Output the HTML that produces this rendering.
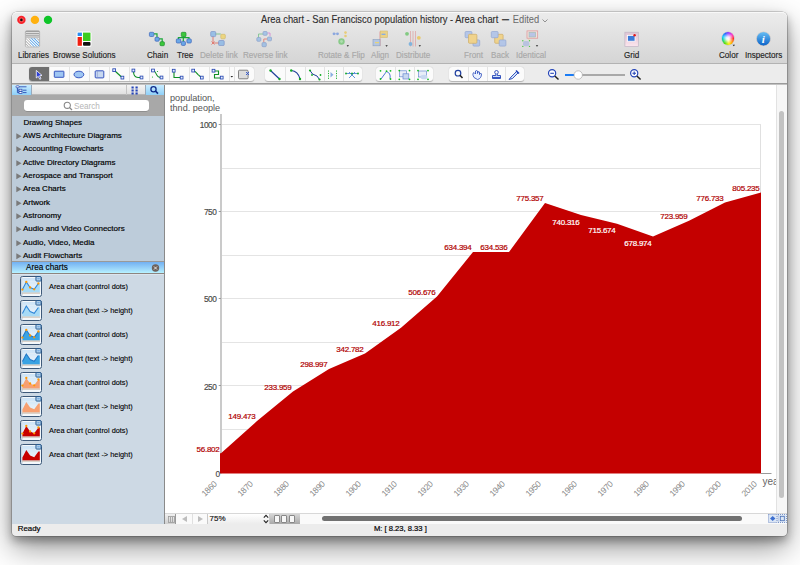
<!DOCTYPE html>
<html><head><meta charset="utf-8">
<style>
*{box-sizing:border-box;margin:0;padding:0}
html,body{width:800px;height:565px;overflow:hidden;background:#fff;font-family:"Liberation Sans",sans-serif}
div,span,svg{position:absolute}
.t{white-space:nowrap;line-height:1}
.tl{top:50.8px;font-size:9px;color:#1e1e1e;white-space:nowrap;line-height:1;transform:scaleX(0.9);transform-origin:0 0;-webkit-text-stroke:0.15px #1e1e1e}
.tl.dis{-webkit-text-stroke:0.15px #a8a8a8}
.dis{color:#a8a8a8}
.grp{top:67px;height:14px;background:#fbfbfb;border-radius:3px;box-shadow:0 0.5px 1px rgba(0,0,0,0.25)}
.sep{top:0;width:1px;height:14px;background:#e6e6e6}
.yl{font-size:8.3px;letter-spacing:-0.5px;fill:#484848;stroke:#484848;stroke-width:0.15px}
.dl{font-size:8px;letter-spacing:-0.25px}
.xl{font-size:8.5px;letter-spacing:-0.3px;fill:#888}
.li{left:12px;width:152px;height:13px;font-size:8px;color:#111;white-space:nowrap;line-height:1}
.arr{left:5px;top:3px;width:0;height:0;border-left:5px solid #7a7a7a;border-top:3.5px solid transparent;border-bottom:3.5px solid transparent}
.li span{left:11px;top:2px}
.ic{left:20px;width:21px;height:20px;border:1px solid #5e7590;border-radius:2px;background:linear-gradient(#fdfdfd,#dde6ee);box-shadow:0 1px 1px rgba(0,0,0,0.35);overflow:hidden}
.itx{left:48px;font-size:7.3px;color:#111;white-space:nowrap;line-height:1}
</style></head><body>

<div style="left:12px;top:12px;width:775px;height:524px;border-radius:5px 5px 4px 4px;background:#ececec;box-shadow:0 5px 10px rgba(0,0,0,0.32),0 12px 30px rgba(0,0,0,0.42),0 0 0 0.6px rgba(0,0,0,0.3)"></div>
<div style="left:12px;top:12px;width:775px;height:52px;border-radius:5px 5px 0 0;background:linear-gradient(#ececec,#d5d5d5);border-bottom:1px solid #b3b3b3;box-shadow:inset 0 1px 0 #f8f8f8"></div>
<svg style="left:0;top:0" width="60" height="30"><circle cx="21.4" cy="19.9" r="4.2" fill="#f8222a"/><circle cx="21.4" cy="19.9" r="2.4" fill="#ff5a5a"/><circle cx="21.4" cy="19.9" r="1.3" fill="#111"/><circle cx="34.9" cy="19.9" r="4.2" fill="#ffb10f"/><circle cx="48" cy="19.9" r="4.2" fill="#0ec528"/></svg>
<div class="t" style="left:261px;top:14.6px;font-size:10.2px;color:#2c2c2c;transform:scaleX(0.915);transform-origin:0 0;-webkit-text-stroke:0.12px #2c2c2c">Area chart - San Francisco population history - Area chart <span style="position:static;color:#444;font-weight:bold;display:inline-block;transform:scaleX(0.75)">—</span> <span style="position:static;color:#6a6a6a;-webkit-text-stroke:0">Edited</span></div>
<svg style="left:541.5px;top:18.5px" width="6" height="4"><path d="M0.5 0.5 L3 3 L5.5 0.5" fill="none" stroke="#888" stroke-width="0.9"/></svg>
<div class="tl" style="left:17.5px">Libraries</div>
<div class="tl" style="left:53.2px">Browse Solutions</div>
<div class="tl" style="left:147px">Chain</div>
<div class="tl" style="left:176.6px">Tree</div>
<div class="tl dis" style="left:200px">Delete link</div>
<div class="tl dis" style="left:243px">Reverse link</div>
<div class="tl dis" style="left:318px">Rotate &amp; Flip</div>
<div class="tl dis" style="left:370.7px">Align</div>
<div class="tl dis" style="left:396px">Distribute</div>
<div class="tl dis" style="left:463.7px">Front</div>
<div class="tl dis" style="left:490.5px">Back</div>
<div class="tl dis" style="left:515.5px">Identical</div>
<div class="tl" style="left:624.2px">Grid</div>
<div class="tl" style="left:718.7px">Color</div>
<div class="tl" style="left:744.5px">Inspectors</div>
<div style="left:12px;top:63px;width:775px;height:21px;background:#ececec;border-top:1px solid #b3b3b3;border-bottom:1px solid #9a9a9a"></div>
<div class="grp" style="left:29px;width:225px"></div>
<div class="grp" style="left:265.2px;width:97.0px"></div>
<div class="grp" style="left:376px;width:56.60000000000002px"></div>
<div class="grp" style="left:448.6px;width:75.39999999999998px"></div>
<div style="left:49px;top:67px;width:1px;height:14px;background:#e3e3e3"></div>
<div style="left:69px;top:67px;width:1px;height:14px;background:#e3e3e3"></div>
<div style="left:89px;top:67px;width:1px;height:14px;background:#e3e3e3"></div>
<div style="left:109px;top:67px;width:1px;height:14px;background:#e3e3e3"></div>
<div style="left:129px;top:67px;width:1px;height:14px;background:#e3e3e3"></div>
<div style="left:149px;top:67px;width:1px;height:14px;background:#e3e3e3"></div>
<div style="left:169px;top:67px;width:1px;height:14px;background:#e3e3e3"></div>
<div style="left:189px;top:67px;width:1px;height:14px;background:#e3e3e3"></div>
<div style="left:209px;top:67px;width:1px;height:14px;background:#e3e3e3"></div>
<div style="left:229px;top:67px;width:1px;height:14px;background:#e3e3e3"></div>
<div style="left:233.5px;top:67px;width:1px;height:14px;background:#e3e3e3"></div>
<div style="left:285px;top:67px;width:1px;height:14px;background:#e3e3e3"></div>
<div style="left:304.5px;top:67px;width:1px;height:14px;background:#e3e3e3"></div>
<div style="left:323.5px;top:67px;width:1px;height:14px;background:#e3e3e3"></div>
<div style="left:342.5px;top:67px;width:1px;height:14px;background:#e3e3e3"></div>
<div style="left:395px;top:67px;width:1px;height:14px;background:#e3e3e3"></div>
<div style="left:414px;top:67px;width:1px;height:14px;background:#e3e3e3"></div>
<div style="left:467.5px;top:67px;width:1px;height:14px;background:#e3e3e3"></div>
<div style="left:486.5px;top:67px;width:1px;height:14px;background:#e3e3e3"></div>
<div style="left:505px;top:67px;width:1px;height:14px;background:#e3e3e3"></div>
<div style="left:29.3px;top:67.2px;width:19.7px;height:13.6px;background:#6f6f6f;border-radius:3px 0 0 3px"></div>
<div style="left:12px;top:84px;width:153px;height:440px;background:#cdd9e4"></div>
<div style="left:164px;top:84px;width:1px;height:440px;background:#8a8a8a"></div>
<div style="left:12px;top:84px;width:775px;height:1px;background:#c2c2c2"></div>
<div style="left:12px;top:85px;width:152px;height:10px;background:linear-gradient(#f4f4f4,#e0e0e0);border-bottom:1px solid #b8b8b8"></div>
<div style="left:12px;top:85px;width:19.6px;height:10px;background:linear-gradient(#c9ecff,#8fd0f8);border-right:1px solid #9ab"></div>
<div style="left:125.6px;top:85px;width:1px;height:10px;background:#c4c4c4"></div>
<div style="left:145px;top:85px;width:19px;height:10px;background:linear-gradient(#c9ecff,#8fd0f8);border-left:1px solid #9ab"></div>
<div style="left:12px;top:95px;width:152px;height:21px;background:#a8a8a8"></div>
<div style="left:24.4px;top:99.6px;width:125px;height:11.4px;background:#fff;border-radius:3px;box-shadow:0 0.5px 0.5px rgba(0,0,0,0.3)"></div>
<svg style="left:62.5px;top:101px" width="10" height="10"><circle cx="4.3" cy="4.3" r="3.1" fill="none" stroke="#888" stroke-width="1.1"/><path d="M6.5 6.5 L9 9" stroke="#888" stroke-width="1.3"/></svg>
<div class="t" style="left:74.4px;top:102px;font-size:8.6px;color:#b5b5b5;transform:scaleX(0.95);transform-origin:0 0">Search</div>
<div style="left:12px;top:116px;width:152px;height:145px;background:#bdccda"></div>
<div style="left:12px;top:261px;width:152px;height:1px;background:#999"></div>
<div class="t" style="left:23.4px;top:118.6px;font-size:8px;color:#000;-webkit-text-stroke:0.18px #000">Drawing Shapes</div>
<svg style="left:16px;top:132.9px" width="7" height="8"><path d="M0.3 0.2 L5.5 3.2 L0.3 6.2Z" fill="#7a7a7a"/></svg>
<div class="t" style="left:23px;top:131.9px;font-size:8px;color:#000;-webkit-text-stroke:0.18px #000">AWS Architecture Diagrams</div>
<svg style="left:16px;top:146.2px" width="7" height="8"><path d="M0.3 0.2 L5.5 3.2 L0.3 6.2Z" fill="#7a7a7a"/></svg>
<div class="t" style="left:23px;top:145.2px;font-size:8px;color:#000;-webkit-text-stroke:0.18px #000">Accounting Flowcharts</div>
<svg style="left:16px;top:159.6px" width="7" height="8"><path d="M0.3 0.2 L5.5 3.2 L0.3 6.2Z" fill="#7a7a7a"/></svg>
<div class="t" style="left:23px;top:158.6px;font-size:8px;color:#000;-webkit-text-stroke:0.18px #000">Active Directory Diagrams</div>
<svg style="left:16px;top:173.0px" width="7" height="8"><path d="M0.3 0.2 L5.5 3.2 L0.3 6.2Z" fill="#7a7a7a"/></svg>
<div class="t" style="left:23px;top:172.0px;font-size:8px;color:#000;-webkit-text-stroke:0.18px #000">Aerospace and Transport</div>
<svg style="left:16px;top:186.3px" width="7" height="8"><path d="M0.3 0.2 L5.5 3.2 L0.3 6.2Z" fill="#7a7a7a"/></svg>
<div class="t" style="left:23px;top:185.3px;font-size:8px;color:#000;-webkit-text-stroke:0.18px #000">Area Charts</div>
<svg style="left:16px;top:199.7px" width="7" height="8"><path d="M0.3 0.2 L5.5 3.2 L0.3 6.2Z" fill="#7a7a7a"/></svg>
<div class="t" style="left:23px;top:198.7px;font-size:8px;color:#000;-webkit-text-stroke:0.18px #000">Artwork</div>
<svg style="left:16px;top:213.0px" width="7" height="8"><path d="M0.3 0.2 L5.5 3.2 L0.3 6.2Z" fill="#7a7a7a"/></svg>
<div class="t" style="left:23px;top:212.0px;font-size:8px;color:#000;-webkit-text-stroke:0.18px #000">Astronomy</div>
<svg style="left:16px;top:226.3px" width="7" height="8"><path d="M0.3 0.2 L5.5 3.2 L0.3 6.2Z" fill="#7a7a7a"/></svg>
<div class="t" style="left:23px;top:225.3px;font-size:8px;color:#000;-webkit-text-stroke:0.18px #000">Audio and Video Connectors</div>
<svg style="left:16px;top:239.7px" width="7" height="8"><path d="M0.3 0.2 L5.5 3.2 L0.3 6.2Z" fill="#7a7a7a"/></svg>
<div class="t" style="left:23px;top:238.7px;font-size:8px;color:#000;-webkit-text-stroke:0.18px #000">Audio, Video, Media</div>
<svg style="left:16px;top:253.0px" width="7" height="8"><path d="M0.3 0.2 L5.5 3.2 L0.3 6.2Z" fill="#7a7a7a"/></svg>
<div class="t" style="left:23px;top:252.0px;font-size:8px;color:#000;-webkit-text-stroke:0.18px #000">Audit Flowcharts</div>
<div style="left:12px;top:262px;width:152px;height:12px;background:linear-gradient(#72b0f2,#a8e2fc 80%,#b8f4ff);border-bottom:1px solid #8d8580"></div>
<div style="left:12px;top:274px;width:152px;height:1px;background:#dbe5ee"></div>
<div class="t" style="left:25.5px;top:263px;font-size:8.8px;color:#000;-webkit-text-stroke:0.15px #000;transform:scaleX(0.93);transform-origin:0 0">Area charts</div>
<svg style="left:151px;top:264px" width="9" height="9"><circle cx="4.5" cy="4" r="3.7" fill="#6e625c"/><path d="M3 2.5 L6 5.5 M6 2.5 L3 5.5" stroke="#e8e8e8" stroke-width="1"/></svg>
<svg style="left:20.3px;top:276px" width="22" height="21" viewBox="0 0 22 21"><rect x="0.5" y="0.5" width="21" height="20" rx="2" fill="#f4f8fb" stroke="#3e5a7a" stroke-width="1"/><rect x="1.3" y="1.3" width="1.2" height="18.4" fill="#b9c9d9"/><defs><linearGradient id="sk0" x1="0" y1="0" x2="0" y2="1"><stop offset="0" stop-color="#cde4f7"/><stop offset="1" stop-color="#eef6fd"/></linearGradient></defs><rect x="2.5" y="2" width="17.5" height="14.8" fill="url(#sk0)"/><path d="M3 5.5H19.5M3 9H19.5M3 12.5H19.5" stroke="#e6eef5" stroke-width="0.6"/><polygon points="2.4,16.6 2.4,13.6 6.3,6 10.1,11.5 14.2,13.3 18.4,7.5 19.8,7.5 19.8,16.6" fill="#a6daf6"/><polyline points="2.4,13.6 6.3,6 10.1,11.5 14.2,13.3 18.4,7.5" fill="none" stroke="#2f86d8" stroke-width="1.1"/><rect x="2" y="16.6" width="18" height="1" fill="#c9b9a9"/><circle cx="2.4" cy="13.6" r="1.15" fill="#ff9800"/><circle cx="6.3" cy="6" r="1.15" fill="#ff9800"/><circle cx="10.1" cy="11.5" r="1.15" fill="#ff9800"/><circle cx="14.2" cy="13.3" r="1.15" fill="#ff9800"/><circle cx="18.4" cy="7.5" r="1.15" fill="#ff9800"/><rect x="16" y="0.7" width="5" height="4.3" rx="0.5" fill="#d8ecfa" stroke="#17508c" stroke-width="1"/><path d="M17.2 2.9 H19.8" stroke="#2a7ad0" stroke-width="0.9"/></svg>
<div class="t" style="left:48.5px;top:283.1px;font-size:8.1px;color:#000;-webkit-text-stroke:0.12px #000;transform:scaleX(0.91);transform-origin:0 0">Area chart (control dots)</div>
<svg style="left:20.3px;top:300px" width="22" height="21" viewBox="0 0 22 21"><rect x="0.5" y="0.5" width="21" height="20" rx="2" fill="#f4f8fb" stroke="#3e5a7a" stroke-width="1"/><rect x="1.3" y="1.3" width="1.2" height="18.4" fill="#b9c9d9"/><defs><linearGradient id="sk1" x1="0" y1="0" x2="0" y2="1"><stop offset="0" stop-color="#cde4f7"/><stop offset="1" stop-color="#eef6fd"/></linearGradient></defs><rect x="2.5" y="2" width="17.5" height="14.8" fill="url(#sk1)"/><path d="M3 5.5H19.5M3 9H19.5M3 12.5H19.5" stroke="#e6eef5" stroke-width="0.6"/><polygon points="2.4,16.6 2.4,13.6 6.3,6 10.1,11.5 14.2,13.3 18.4,7.5 19.8,7.5 19.8,16.6" fill="#a6daf6"/><polyline points="2.4,13.6 6.3,6 10.1,11.5 14.2,13.3 18.4,7.5" fill="none" stroke="#2f86d8" stroke-width="1.1"/><rect x="2" y="16.6" width="18" height="1" fill="#c9b9a9"/><rect x="16" y="0.7" width="5" height="4.3" rx="0.5" fill="#d8ecfa" stroke="#17508c" stroke-width="1"/><path d="M17.2 2.9 H19.8" stroke="#2a7ad0" stroke-width="0.9"/></svg>
<div class="t" style="left:48.5px;top:307.1px;font-size:8.1px;color:#000;-webkit-text-stroke:0.12px #000;transform:scaleX(0.91);transform-origin:0 0">Area chart (text -&gt; height)</div>
<svg style="left:20.3px;top:324px" width="22" height="21" viewBox="0 0 22 21"><rect x="0.5" y="0.5" width="21" height="20" rx="2" fill="#f4f8fb" stroke="#3e5a7a" stroke-width="1"/><rect x="1.3" y="1.3" width="1.2" height="18.4" fill="#b9c9d9"/><defs><linearGradient id="sk2" x1="0" y1="0" x2="0" y2="1"><stop offset="0" stop-color="#cde4f7"/><stop offset="1" stop-color="#eef6fd"/></linearGradient></defs><rect x="2.5" y="2" width="17.5" height="14.8" fill="url(#sk2)"/><path d="M3 5.5H19.5M3 9H19.5M3 12.5H19.5" stroke="#e6eef5" stroke-width="0.6"/><polygon points="2.4,16.6 2.4,13.6 6.3,6 10.1,11.5 14.2,13.3 18.4,7.5 19.8,7.5 19.8,16.6" fill="#3aa3e3"/><polyline points="2.4,13.6 6.3,6 10.1,11.5 14.2,13.3 18.4,7.5" fill="none" stroke="#2378c8" stroke-width="1.1"/><rect x="2" y="16.6" width="18" height="1" fill="#c9b9a9"/><circle cx="2.4" cy="13.6" r="1.15" fill="#ff9800"/><circle cx="6.3" cy="6" r="1.15" fill="#ff9800"/><circle cx="10.1" cy="11.5" r="1.15" fill="#ff9800"/><circle cx="14.2" cy="13.3" r="1.15" fill="#ff9800"/><circle cx="18.4" cy="7.5" r="1.15" fill="#ff9800"/><rect x="16" y="0.7" width="5" height="4.3" rx="0.5" fill="#d8ecfa" stroke="#17508c" stroke-width="1"/><path d="M17.2 2.9 H19.8" stroke="#2a7ad0" stroke-width="0.9"/></svg>
<div class="t" style="left:48.5px;top:331.1px;font-size:8.1px;color:#000;-webkit-text-stroke:0.12px #000;transform:scaleX(0.91);transform-origin:0 0">Area chart (control dots)</div>
<svg style="left:20.3px;top:348px" width="22" height="21" viewBox="0 0 22 21"><rect x="0.5" y="0.5" width="21" height="20" rx="2" fill="#f4f8fb" stroke="#3e5a7a" stroke-width="1"/><rect x="1.3" y="1.3" width="1.2" height="18.4" fill="#b9c9d9"/><defs><linearGradient id="sk3" x1="0" y1="0" x2="0" y2="1"><stop offset="0" stop-color="#cde4f7"/><stop offset="1" stop-color="#eef6fd"/></linearGradient></defs><rect x="2.5" y="2" width="17.5" height="14.8" fill="url(#sk3)"/><path d="M3 5.5H19.5M3 9H19.5M3 12.5H19.5" stroke="#e6eef5" stroke-width="0.6"/><polygon points="2.4,16.6 2.4,13.6 6.3,6 10.1,11.5 14.2,13.3 18.4,7.5 19.8,7.5 19.8,16.6" fill="#3aa3e3"/><polyline points="2.4,13.6 6.3,6 10.1,11.5 14.2,13.3 18.4,7.5" fill="none" stroke="#2378c8" stroke-width="1.1"/><rect x="2" y="16.6" width="18" height="1" fill="#c9b9a9"/><rect x="16" y="0.7" width="5" height="4.3" rx="0.5" fill="#d8ecfa" stroke="#17508c" stroke-width="1"/><path d="M17.2 2.9 H19.8" stroke="#2a7ad0" stroke-width="0.9"/></svg>
<div class="t" style="left:48.5px;top:355.1px;font-size:8.1px;color:#000;-webkit-text-stroke:0.12px #000;transform:scaleX(0.91);transform-origin:0 0">Area chart (text -&gt; height)</div>
<svg style="left:20.3px;top:372px" width="22" height="21" viewBox="0 0 22 21"><rect x="0.5" y="0.5" width="21" height="20" rx="2" fill="#f4f8fb" stroke="#3e5a7a" stroke-width="1"/><rect x="1.3" y="1.3" width="1.2" height="18.4" fill="#b9c9d9"/><defs><linearGradient id="sk4" x1="0" y1="0" x2="0" y2="1"><stop offset="0" stop-color="#cde4f7"/><stop offset="1" stop-color="#eef6fd"/></linearGradient></defs><rect x="2.5" y="2" width="17.5" height="14.8" fill="url(#sk4)"/><path d="M3 5.5H19.5M3 9H19.5M3 12.5H19.5" stroke="#e6eef5" stroke-width="0.6"/><polygon points="2.4,16.6 2.4,13.6 6.3,6 10.1,11.5 14.2,13.3 18.4,7.5 19.8,7.5 19.8,16.6" fill="#f7a071"/><rect x="2" y="16.6" width="18" height="1" fill="#c9b9a9"/><circle cx="2.4" cy="13.6" r="1.15" fill="#ff9800"/><circle cx="6.3" cy="6" r="1.15" fill="#ff9800"/><circle cx="10.1" cy="11.5" r="1.15" fill="#ff9800"/><circle cx="14.2" cy="13.3" r="1.15" fill="#ff9800"/><circle cx="18.4" cy="7.5" r="1.15" fill="#ff9800"/><rect x="16" y="0.7" width="5" height="4.3" rx="0.5" fill="#d8ecfa" stroke="#17508c" stroke-width="1"/><path d="M17.2 2.9 H19.8" stroke="#2a7ad0" stroke-width="0.9"/></svg>
<div class="t" style="left:48.5px;top:379.1px;font-size:8.1px;color:#000;-webkit-text-stroke:0.12px #000;transform:scaleX(0.91);transform-origin:0 0">Area chart (control dots)</div>
<svg style="left:20.3px;top:396px" width="22" height="21" viewBox="0 0 22 21"><rect x="0.5" y="0.5" width="21" height="20" rx="2" fill="#f4f8fb" stroke="#3e5a7a" stroke-width="1"/><rect x="1.3" y="1.3" width="1.2" height="18.4" fill="#b9c9d9"/><defs><linearGradient id="sk5" x1="0" y1="0" x2="0" y2="1"><stop offset="0" stop-color="#cde4f7"/><stop offset="1" stop-color="#eef6fd"/></linearGradient></defs><rect x="2.5" y="2" width="17.5" height="14.8" fill="url(#sk5)"/><path d="M3 5.5H19.5M3 9H19.5M3 12.5H19.5" stroke="#e6eef5" stroke-width="0.6"/><polygon points="2.4,16.6 2.4,13.6 6.3,6 10.1,11.5 14.2,13.3 18.4,7.5 19.8,7.5 19.8,16.6" fill="#f7a071"/><rect x="2" y="16.6" width="18" height="1" fill="#c9b9a9"/><rect x="16" y="0.7" width="5" height="4.3" rx="0.5" fill="#d8ecfa" stroke="#17508c" stroke-width="1"/><path d="M17.2 2.9 H19.8" stroke="#2a7ad0" stroke-width="0.9"/></svg>
<div class="t" style="left:48.5px;top:403.1px;font-size:8.1px;color:#000;-webkit-text-stroke:0.12px #000;transform:scaleX(0.91);transform-origin:0 0">Area chart (text -&gt; height)</div>
<svg style="left:20.3px;top:420px" width="22" height="21" viewBox="0 0 22 21"><rect x="0.5" y="0.5" width="21" height="20" rx="2" fill="#f4f8fb" stroke="#3e5a7a" stroke-width="1"/><rect x="1.3" y="1.3" width="1.2" height="18.4" fill="#b9c9d9"/><defs><linearGradient id="sk6" x1="0" y1="0" x2="0" y2="1"><stop offset="0" stop-color="#cde4f7"/><stop offset="1" stop-color="#eef6fd"/></linearGradient></defs><rect x="2.5" y="2" width="17.5" height="14.8" fill="url(#sk6)"/><path d="M3 5.5H19.5M3 9H19.5M3 12.5H19.5" stroke="#e6eef5" stroke-width="0.6"/><polygon points="2.4,16.6 2.4,13.6 6.3,6 10.1,11.5 14.2,13.3 18.4,7.5 19.8,7.5 19.8,16.6" fill="#c80000"/><rect x="2" y="16.6" width="18" height="1" fill="#c9b9a9"/><circle cx="2.4" cy="13.6" r="1.15" fill="#ff9800"/><circle cx="6.3" cy="6" r="1.15" fill="#ff9800"/><circle cx="10.1" cy="11.5" r="1.15" fill="#ff9800"/><circle cx="14.2" cy="13.3" r="1.15" fill="#ff9800"/><circle cx="18.4" cy="7.5" r="1.15" fill="#ff9800"/><rect x="16" y="0.7" width="5" height="4.3" rx="0.5" fill="#d8ecfa" stroke="#17508c" stroke-width="1"/><path d="M17.2 2.9 H19.8" stroke="#2a7ad0" stroke-width="0.9"/></svg>
<div class="t" style="left:48.5px;top:427.1px;font-size:8.1px;color:#000;-webkit-text-stroke:0.12px #000;transform:scaleX(0.91);transform-origin:0 0">Area chart (control dots)</div>
<svg style="left:20.3px;top:444px" width="22" height="21" viewBox="0 0 22 21"><rect x="0.5" y="0.5" width="21" height="20" rx="2" fill="#f4f8fb" stroke="#3e5a7a" stroke-width="1"/><rect x="1.3" y="1.3" width="1.2" height="18.4" fill="#b9c9d9"/><defs><linearGradient id="sk7" x1="0" y1="0" x2="0" y2="1"><stop offset="0" stop-color="#cde4f7"/><stop offset="1" stop-color="#eef6fd"/></linearGradient></defs><rect x="2.5" y="2" width="17.5" height="14.8" fill="url(#sk7)"/><path d="M3 5.5H19.5M3 9H19.5M3 12.5H19.5" stroke="#e6eef5" stroke-width="0.6"/><polygon points="2.4,16.6 2.4,13.6 6.3,6 10.1,11.5 14.2,13.3 18.4,7.5 19.8,7.5 19.8,16.6" fill="#c80000"/><rect x="2" y="16.6" width="18" height="1" fill="#c9b9a9"/><rect x="16" y="0.7" width="5" height="4.3" rx="0.5" fill="#d8ecfa" stroke="#17508c" stroke-width="1"/><path d="M17.2 2.9 H19.8" stroke="#2a7ad0" stroke-width="0.9"/></svg>
<div class="t" style="left:48.5px;top:451.1px;font-size:8.1px;color:#000;-webkit-text-stroke:0.12px #000;transform:scaleX(0.91);transform-origin:0 0">Area chart (text -&gt; height)</div>
<div class="t" style="left:17.7px;top:524.8px;font-size:7.9px;color:#000;-webkit-text-stroke:0.18px #000">Ready</div>
<div class="t" style="left:374px;top:525px;font-size:7.6px;color:#000;-webkit-text-stroke:0.2px #000">M: [ 8.23, 8.33 ]</div>
<div style="left:165px;top:85px;width:611px;height:428px;background:#fff"></div>
<svg style="left:0;top:0" width="800" height="565"><line x1="221" y1="429.5" x2="761" y2="429.5" stroke="#e4e4e4" stroke-width="1"/>
<line x1="221" y1="385.5" x2="761" y2="385.5" stroke="#e4e4e4" stroke-width="1"/>
<line x1="221" y1="342.5" x2="761" y2="342.5" stroke="#e4e4e4" stroke-width="1"/>
<line x1="221" y1="298.5" x2="761" y2="298.5" stroke="#e4e4e4" stroke-width="1"/>
<line x1="221" y1="255.5" x2="761" y2="255.5" stroke="#e4e4e4" stroke-width="1"/>
<line x1="221" y1="211.5" x2="761" y2="211.5" stroke="#e4e4e4" stroke-width="1"/>
<line x1="221" y1="168.5" x2="761" y2="168.5" stroke="#e4e4e4" stroke-width="1"/>
<line x1="221" y1="124.5" x2="761" y2="124.5" stroke="#e4e4e4" stroke-width="1"/>
<line x1="760.5" y1="124.5" x2="760.5" y2="473" stroke="#e0e0e0" stroke-width="1"/>
<line x1="221" y1="114" x2="221" y2="473.5" stroke="#cacaca" stroke-width="2"/>
<line x1="218.7" y1="385.5" x2="221" y2="385.5" stroke="#9a9a9a" stroke-width="1"/>
<line x1="218.7" y1="298.5" x2="221" y2="298.5" stroke="#9a9a9a" stroke-width="1"/>
<line x1="218.7" y1="211.5" x2="221" y2="211.5" stroke="#9a9a9a" stroke-width="1"/>
<line x1="218.7" y1="124.5" x2="221" y2="124.5" stroke="#9a9a9a" stroke-width="1"/>
<polygon points="220,473.40000000000003 220,453.3 221.0,453.3 257.0,421.0 293.0,391.6 329.0,368.9 365.0,353.6 401.0,327.8 437.0,296.5 473.0,252.0 509.0,252.0 545.0,202.9 581.0,215.1 617.0,223.7 653.0,236.5 689.0,220.8 725.0,202.4 761.0,192.5 761,473.40000000000003" fill="#c40000"/>
<line x1="761" y1="473.5" x2="771.5" y2="473.5" stroke="#9a9a9a" stroke-width="1"/>
<text x="219.6" y="476.6" text-anchor="end" class="yl">0</text>
<text x="216.3" y="389.5" text-anchor="end" class="yl">250</text>
<text x="216.3" y="302.4" text-anchor="end" class="yl">500</text>
<text x="216.3" y="215.2" text-anchor="end" class="yl">750</text>
<text x="216.3" y="128.1" text-anchor="end" class="yl">1000</text>
<text x="219.5" y="451.5" text-anchor="end" class="dl" fill="#b00000" stroke="#b00000" stroke-width="0.2">56.802</text>
<text x="255.5" y="419.2" text-anchor="end" class="dl" fill="#b00000" stroke="#b00000" stroke-width="0.2">149.473</text>
<text x="291.5" y="389.8" text-anchor="end" class="dl" fill="#b00000" stroke="#b00000" stroke-width="0.2">233.959</text>
<text x="327.5" y="367.1" text-anchor="end" class="dl" fill="#b00000" stroke="#b00000" stroke-width="0.2">298.997</text>
<text x="363.5" y="351.8" text-anchor="end" class="dl" fill="#b00000" stroke="#b00000" stroke-width="0.2">342.782</text>
<text x="399.5" y="326.0" text-anchor="end" class="dl" fill="#b00000" stroke="#b00000" stroke-width="0.2">416.912</text>
<text x="435.5" y="294.7" text-anchor="end" class="dl" fill="#b00000" stroke="#b00000" stroke-width="0.2">506.676</text>
<text x="471.5" y="250.2" text-anchor="end" class="dl" fill="#b00000" stroke="#b00000" stroke-width="0.2">634.394</text>
<text x="507.5" y="250.2" text-anchor="end" class="dl" fill="#b00000" stroke="#b00000" stroke-width="0.2">634.536</text>
<text x="543.5" y="201.1" text-anchor="end" class="dl" fill="#b00000" stroke="#b00000" stroke-width="0.2">775.357</text>
<text x="579.5" y="224.6" text-anchor="end" class="dl" fill="#fff" stroke="#fff" stroke-width="0.2">740.316</text>
<text x="615.5" y="233.2" text-anchor="end" class="dl" fill="#fff" stroke="#fff" stroke-width="0.2">715.674</text>
<text x="651.5" y="246.0" text-anchor="end" class="dl" fill="#fff" stroke="#fff" stroke-width="0.2">678.974</text>
<text x="687.5" y="219.0" text-anchor="end" class="dl" fill="#b00000" stroke="#b00000" stroke-width="0.2">723.959</text>
<text x="723.5" y="200.6" text-anchor="end" class="dl" fill="#b00000" stroke="#b00000" stroke-width="0.2">776.733</text>
<text x="759.5" y="190.7" text-anchor="end" class="dl" fill="#b00000" stroke="#b00000" stroke-width="0.2">805.235</text>
<text transform="translate(217.5,484.5) rotate(-45)" text-anchor="end" class="xl">1860</text>
<text transform="translate(253.5,484.5) rotate(-45)" text-anchor="end" class="xl">1870</text>
<text transform="translate(289.5,484.5) rotate(-45)" text-anchor="end" class="xl">1880</text>
<text transform="translate(325.5,484.5) rotate(-45)" text-anchor="end" class="xl">1890</text>
<text transform="translate(361.5,484.5) rotate(-45)" text-anchor="end" class="xl">1900</text>
<text transform="translate(397.5,484.5) rotate(-45)" text-anchor="end" class="xl">1910</text>
<text transform="translate(433.5,484.5) rotate(-45)" text-anchor="end" class="xl">1920</text>
<text transform="translate(469.5,484.5) rotate(-45)" text-anchor="end" class="xl">1930</text>
<text transform="translate(505.5,484.5) rotate(-45)" text-anchor="end" class="xl">1940</text>
<text transform="translate(541.5,484.5) rotate(-45)" text-anchor="end" class="xl">1950</text>
<text transform="translate(577.5,484.5) rotate(-45)" text-anchor="end" class="xl">1960</text>
<text transform="translate(613.5,484.5) rotate(-45)" text-anchor="end" class="xl">1970</text>
<text transform="translate(649.5,484.5) rotate(-45)" text-anchor="end" class="xl">1980</text>
<text transform="translate(685.5,484.5) rotate(-45)" text-anchor="end" class="xl">1990</text>
<text transform="translate(721.5,484.5) rotate(-45)" text-anchor="end" class="xl">2000</text>
<text transform="translate(757.5,484.5) rotate(-45)" text-anchor="end" class="xl">2010</text>
</svg>
<div class="t" style="left:169.5px;top:93px;font-size:9.6px;color:#555;line-height:10.2px;transform:scaleX(0.95);transform-origin:0 0">population,<br>thnd. people</div>
<div class="t" style="left:762.4px;top:477px;font-size:10px;color:#666;width:14px;overflow:hidden">year</div>
<div style="left:776px;top:85px;width:11px;height:428px;background:#f6f6f6;border-left:1px solid #e2e2e2"></div>
<div style="left:779px;top:111px;width:5px;height:387px;background:#c2c2c2;border-radius:3px"></div>
<div style="left:165px;top:513px;width:622px;height:11px;background:#fafafa;border-top:1px solid #d8d8d8"></div>
<div style="left:165px;top:513.5px;width:11px;height:10.5px;background:linear-gradient(#f0f0f0,#cfcfcf);border-right:1px solid #999"></div>
<svg style="left:167.5px;top:515.5px" width="7" height="7"><rect x="0.5" y="0.5" width="6" height="6" fill="none" stroke="#999" stroke-width="0.8"/><path d="M2.5 1V6M4.5 1V6" stroke="#999" stroke-width="0.8"/></svg>
<div style="left:191.5px;top:514px;width:1px;height:10px;background:#e0e0e0"></div>
<div style="left:181.5px;top:515.5px;width:0;height:0;border-right:5px solid #bdbdbd;border-top:3.5px solid transparent;border-bottom:3.5px solid transparent"></div>
<div style="left:197.5px;top:515.5px;width:0;height:0;border-left:5px solid #bdbdbd;border-top:3.5px solid transparent;border-bottom:3.5px solid transparent"></div>
<div style="left:207px;top:513.5px;width:63px;height:10.5px;background:linear-gradient(#fff,#ececec);border-left:1px solid #c9c9c9;border-right:1px solid #c9c9c9"></div>
<div class="t" style="left:209.5px;top:515.2px;font-size:8px;color:#111;-webkit-text-stroke:0.15px #111">75%</div>
<svg style="left:262.5px;top:514px" width="6" height="10"><path d="M0.8 3.6 L3 1.4 L5.2 3.6 M0.8 6.4 L3 8.6 L5.2 6.4" fill="none" stroke="#222" stroke-width="1.1"/></svg>
<div style="left:270px;top:513.5px;width:30px;height:10.5px;background:linear-gradient(#d6d6d6,#a9a9a9)"></div>
<div style="left:273.5px;top:515px;width:6.3px;height:7.6px;background:#f7f7f7;border:0.8px solid #888;border-radius:1px"></div>
<div style="left:281.2px;top:515px;width:6.3px;height:7.6px;background:#f7f7f7;border:0.8px solid #888;border-radius:1px"></div>
<div style="left:288.9px;top:515px;width:6.3px;height:7.6px;background:#f7f7f7;border:0.8px solid #888;border-radius:1px"></div>
<div style="left:322px;top:515.7px;width:420px;height:5.6px;background:#717171;border-radius:3px"></div>
<svg style="left:768px;top:514px" width="19" height="9"><rect x="0.5" y="0.5" width="8.5" height="8" fill="#dbe6f5" stroke="#4b6fb5" stroke-width="0.7" stroke-dasharray="1 1"/><path d="M2 4.5 L4.7 2 L7.4 4.5 L4.7 7Z" fill="#3d6fd0"/><rect x="10" y="0.5" width="8.5" height="8" fill="#dbe6f5" stroke="#4b6fb5" stroke-width="0.7" stroke-dasharray="1 1"/><rect x="12.3" y="2.3" width="4" height="4.4" fill="none" stroke="#4b6fb5" stroke-width="0.8"/></svg>
<svg style="left:0;top:0" width="800" height="100"><defs><pattern id="chk" x="0" y="0" width="3.2" height="3.2" patternUnits="userSpaceOnUse" patternTransform="rotate(45)"><rect width="3.2" height="3.2" fill="#fff"/><rect width="1.6" height="1.6" fill="#8c8c8c"/><rect x="1.6" y="1.6" width="1.6" height="1.6" fill="#8c8c8c"/></pattern><pattern id="chkb" x="0" y="0" width="3.2" height="3.2" patternUnits="userSpaceOnUse" patternTransform="rotate(45)"><rect width="3.2" height="3.2" fill="#e8f4ff"/><rect width="1.6" height="1.6" fill="#3d8ee0"/><rect x="1.6" y="1.6" width="1.6" height="1.6" fill="#3d8ee0"/></pattern></defs><rect x="25.4" y="30.7" width="14.2" height="16.2" rx="1.2" fill="#f0f0f0" stroke="#a6a6a6" stroke-width="0.8"/><path d="M26 31.6H39" stroke="#8e8e8e" stroke-width="0.9"/><path d="M26 33.4H39" stroke="#8e8e8e" stroke-width="0.9"/><path d="M26 35.2H39" stroke="#8e8e8e" stroke-width="0.9"/><path d="M26 37H39" stroke="#8e8e8e" stroke-width="0.9"/><defs><clipPath id="lc"><rect x="26" y="38.2" width="13" height="8.3"/></clipPath></defs><g clip-path="url(#lc)"><rect x="26" y="38.2" width="13" height="8.3" fill="#a9a9a9"/><path d="M30 38.2H36L39 41.2V46.5H32L30 43Z" fill="#4b9be6"/><path d="M18.5 38 L27.5 47" stroke="#fff" stroke-width="1.1"/><path d="M21.3 38 L30.3 47" stroke="#fff" stroke-width="1.1"/><path d="M24.1 38 L33.1 47" stroke="#fff" stroke-width="1.1"/><path d="M26.9 38 L35.9 47" stroke="#fff" stroke-width="1.1"/><path d="M29.7 38 L38.7 47" stroke="#fff" stroke-width="1.1"/><path d="M32.5 38 L41.5 47" stroke="#fff" stroke-width="1.1"/><path d="M35.3 38 L44.3 47" stroke="#fff" stroke-width="1.1"/><path d="M38.1 38 L47.1 47" stroke="#fff" stroke-width="1.1"/></g><rect x="76.5" y="31.5" width="15" height="15.5" rx="2" fill="#fff"/><rect x="77.6" y="32.6" width="4.3" height="3.4" fill="#2a8cf0"/><rect x="77.6" y="37" width="4.3" height="8.8" fill="#f01e10"/><rect x="83" y="32.6" width="7.5" height="8.4" fill="#3ccc20"/><rect x="83" y="42" width="7.5" height="3.8" rx="1" fill="#111"/><path d="M153.8 33.8H157V37.5 M159 38.8H162.2V42" fill="none" stroke="#1aa838" stroke-width="1.2"/><rect x="149.4" y="32.3" width="4.4" height="4.2" rx="1" fill="#6aa8e8" stroke="#3d63b8" stroke-width="0.7"/><rect x="155" y="37.3" width="4.2" height="3.9" rx="1" fill="#6aa8e8" stroke="#3d63b8" stroke-width="0.7"/><rect x="160" y="41.7" width="4.4" height="4" rx="1" fill="#3cc83c" stroke="#1e8e2e" stroke-width="0.7"/><path d="M183.6 36.5V38 M178.4 39V37.6H189V39 M183.3 37.6V41.5" fill="none" stroke="#1aa838" stroke-width="1.2"/><rect x="181.3" y="32.3" width="4.7" height="4.4" rx="1" fill="#3cc83c" stroke="#1e8e2e" stroke-width="0.7"/><rect x="176.3" y="38.9" width="4.4" height="4.1" rx="1" fill="#6aa8e8" stroke="#3d63b8" stroke-width="0.7"/><rect x="181.3" y="41.4" width="4.1" height="4" rx="1" fill="#6aa8e8" stroke="#3d63b8" stroke-width="0.7"/><rect x="186.9" y="38.9" width="4.4" height="4.1" rx="1" fill="#6aa8e8" stroke="#3d63b8" stroke-width="0.7"/><g opacity="0.55"><path d="M215.7 34H220.8" stroke="#22aa44" stroke-width="0.9"/><path d="M213 36.6V43H218.6" fill="none" stroke="#e03020" stroke-width="1"/><path d="M211.5 41.5L214.5 44.5M214.5 41.5L211.5 44.5" stroke="#e03020" stroke-width="1"/></g><g opacity="0.6"><rect x="210.7" y="31.5" width="5" height="5.1" rx="1" fill="#6aa8e8" stroke="#3d63b8" stroke-width="0.7"/><rect x="220.8" y="34.3" width="4.5" height="4.5" rx="1" fill="#f4d040" stroke="#c8a020" stroke-width="0.7"/><rect x="218.6" y="40.5" width="5.6" height="5.1" rx="1" fill="#6aa8e8" stroke="#3d63b8" stroke-width="0.7"/></g><g opacity="0.5"><path d="M258.5 38V34H263" fill="none" stroke="#22aa44" stroke-width="0.9"/><path d="M267.5 33H270V36" fill="none" stroke="#cc33cc" stroke-width="0.9"/><path d="M267 39H263.8V42.5" fill="none" stroke="#e03020" stroke-width="1"/><rect x="256.8" y="37.5" width="4" height="3.8" rx="1" fill="#6aa8e8" stroke="#3d63b8" stroke-width="0.7"/><rect x="263" y="31.5" width="4.2" height="3.8" rx="1" fill="#6aa8e8" stroke="#3d63b8" stroke-width="0.7"/><rect x="267.5" y="37" width="4" height="3.8" rx="1" fill="#6aa8e8" stroke="#3d63b8" stroke-width="0.7"/><rect x="262" y="42.6" width="4.3" height="4.1" rx="1" fill="#6aa8e8" stroke="#3d63b8" stroke-width="0.7"/></g><g opacity="0.55"><circle cx="334" cy="33.8" r="1.4" fill="#4477dd"/><circle cx="337.5" cy="33.8" r="1.4" fill="#4477dd"/><path d="M335.4 33.8H336.3" stroke="#4477dd"/><circle cx="345.5" cy="32.6" r="1.3" fill="#eebb22"/><circle cx="345.5" cy="36" r="1.3" fill="#eebb22"/><circle cx="341.5" cy="41.5" r="3.2" fill="#44bb44"/><circle cx="341.5" cy="41.5" r="1.4" fill="#88dd88"/></g><path d="M346.6 45.3h2.4l-1.2 1.4z" fill="#222"/><g opacity="0.6"><path d="M380 31.5V46" stroke="#e05050" stroke-width="0.8"/><rect x="380.3" y="31" width="7.2" height="6.5" fill="#f2c84a" stroke="#c9a030" stroke-width="0.6"/><rect x="373" y="39.5" width="7" height="6.3" fill="#9ab8e8" stroke="#5577aa" stroke-width="0.6"/><path d="M381.5 34.3H385.5" stroke="#4488ee" stroke-width="1.3"/><path d="M375 42.6H379" stroke="#eecc33" stroke-width="1.3"/></g><path d="M385.4 45.3h2.4l-1.2 1.4z" fill="#222"/><g opacity="0.6"><path d="M410.5 31V46.5M413 31V46.5M415.5 31V46.5" stroke="#e08080" stroke-width="0.8"/><circle cx="407" cy="33.8" r="1.9" fill="#44bb44"/><circle cx="418.8" cy="37.8" r="1.9" fill="#eebb22"/><circle cx="410.5" cy="44" r="1.9" fill="#4499dd"/></g><path d="M418.6 45.3h2.4l-1.2 1.4z" fill="#222"/><g opacity="0.8"><rect x="465.1" y="31.5" width="6.8" height="6.2" rx="1" fill="#a9c0ea" stroke="#7f9ad0" stroke-width="0.7"/><rect x="473" y="39.9" width="6.7" height="6.2" rx="1" fill="#a9c0ea" stroke="#7f9ad0" stroke-width="0.7"/><rect x="468.5" y="34.3" width="8.4" height="9" rx="1" fill="#f4d078" stroke="#caa048" stroke-width="0.7"/></g><g opacity="0.8"><rect x="494.7" y="34.3" width="8.4" height="9" rx="1" fill="#f4d078" stroke="#caa048" stroke-width="0.7"/><rect x="491.3" y="31.5" width="6.8" height="6.2" rx="1" fill="#a9c0ea" stroke="#7f9ad0" stroke-width="0.7"/><rect x="499.2" y="39.9" width="6.7" height="6.2" rx="1" fill="#a9c0ea" stroke="#7f9ad0" stroke-width="0.7"/></g><g opacity="0.7"><rect x="527" y="30.9" width="10.7" height="7.3" fill="#f2e0e0" stroke="#e07070" stroke-width="0.7"/><rect x="529" y="32.2" width="6.7" height="4.8" fill="#a9b8e8" stroke="#7faa80" stroke-width="0.5"/><path d="M528 39L530 40.5" stroke="#f0c080" stroke-width="0.6"/><rect x="523" y="41" width="6.3" height="5.2" rx="2" fill="#a9b8e0"/><circle cx="522.8" cy="40.8" r="0.7" fill="#11bb11"/><circle cx="529.5" cy="40.8" r="0.7" fill="#11bb11"/><circle cx="522.8" cy="46.4" r="0.7" fill="#11bb11"/><circle cx="529.5" cy="46.4" r="0.7" fill="#11bb11"/></g><path d="M535.8 45.3h2.4l-1.2 1.4z" fill="#222"/><defs><linearGradient id="gg" x1="0" y1="0" x2="0" y2="1"><stop offset="0" stop-color="#dcc4d4"/><stop offset="0.5" stop-color="#f0d2de"/><stop offset="1" stop-color="#fbe6ee"/></linearGradient></defs><rect x="624.9" y="32.2" width="13.4" height="14.4" fill="url(#gg)" stroke="#c0b4c4" stroke-width="0.7"/><rect x="627.6" y="35.4" width="7.4" height="5.8" fill="#3a7ad8" stroke="#fff" stroke-width="0.8"/><circle cx="634.6" cy="35.2" r="1.2" fill="#e01818"/><path d="M732.6 44.8h2.4l-1.2 1.4z" fill="#222"/><defs><linearGradient id="ig" x1="0" y1="0" x2="0" y2="1"><stop offset="0" stop-color="#6ac0f5"/><stop offset="1" stop-color="#0a62c8"/></linearGradient></defs><circle cx="763.5" cy="38.8" r="7.1" fill="url(#ig)" stroke="#e9d2c2" stroke-width="0.6"/><text x="763.3" y="43" text-anchor="middle" font-family="Liberation Serif" font-style="italic" font-weight="bold" font-size="11" fill="#fff">i</text><path d="M36.3 70.4V78L38.2 76.3 39.8 79.3 41 78.6 39.5 75.8 42 75.4Z" fill="#2d3fd8" stroke="#fff" stroke-width="0.8"/><rect x="54.3" y="71.2" width="9.6" height="6.1" rx="0.5" fill="#9fc6f3" stroke="#2545b8" stroke-width="0.9"/><ellipse cx="78.9" cy="74.5" rx="4.9" ry="3.3" fill="#9fc6f3" stroke="#2545b8" stroke-width="0.9"/><rect x="95.2" y="70.8" width="8.6" height="7.1" rx="0.8" fill="#c8d8f0" stroke="#2545b8" stroke-width="0.9"/><path d="M97.4 71V77.7" stroke="#8899cc" stroke-width="0.6"/><path d="M114.5 70.5L122 77.5" fill="none" stroke="#0e8f22" stroke-width="1.1"/><rect x="112.8" y="68.8" width="2.8" height="2.8" fill="#e4eefc" stroke="#2040b0" stroke-width="0.8"/><rect x="121.0" y="76.19999999999999" width="2.8" height="2.8" fill="#e4eefc" stroke="#2040b0" stroke-width="0.8"/><path d="M133.5 71Q133.5 77.5 138 77.5H141" fill="none" stroke="#0e8f22" stroke-width="1.1"/><rect x="132.0" y="69.1" width="2.8" height="2.8" fill="#e4eefc" stroke="#2040b0" stroke-width="0.8"/><rect x="140.1" y="76.1" width="2.8" height="2.8" fill="#e4eefc" stroke="#2040b0" stroke-width="0.8"/><path d="M153.5 71C157 71 155 77.5 161 77.5" fill="none" stroke="#0e8f22" stroke-width="1.1"/><rect x="151.6" y="69.1" width="2.8" height="2.8" fill="#e4eefc" stroke="#2040b0" stroke-width="0.8"/><rect x="160.1" y="76.1" width="2.8" height="2.8" fill="#e4eefc" stroke="#2040b0" stroke-width="0.8"/><circle cx="157.5" cy="71.5" r="0.6" fill="#11aa22"/><circle cx="152.5" cy="77" r="0.6" fill="#11aa22"/><path d="M174 71V77.5H181" fill="none" stroke="#0e8f22" stroke-width="1.1"/><rect x="172.29999999999998" y="69.3" width="2.8" height="2.8" fill="#e4eefc" stroke="#2040b0" stroke-width="0.8"/><rect x="180.2" y="76.19999999999999" width="2.8" height="2.8" fill="#e4eefc" stroke="#2040b0" stroke-width="0.8"/><path d="M193.5 71C196 71 198 75 198.5 75S200.5 77.5 201.5 77.5" fill="none" stroke="#0e8f22" stroke-width="1.1"/><rect x="191.79999999999998" y="69.19999999999999" width="2.8" height="2.8" fill="#e4eefc" stroke="#2040b0" stroke-width="0.8"/><rect x="200.4" y="76.19999999999999" width="2.8" height="2.8" fill="#e4eefc" stroke="#2040b0" stroke-width="0.8"/><path d="M214 71H218.5V74.5H214.5V78H221" fill="none" stroke="#0e8f22" stroke-width="1.1"/><rect x="212.1" y="69.3" width="2.8" height="2.8" fill="#e4eefc" stroke="#2040b0" stroke-width="0.8"/><rect x="220.29999999999998" y="76.19999999999999" width="2.8" height="2.8" fill="#e4eefc" stroke="#2040b0" stroke-width="0.8"/><path d="M230.5 76h2.6l-1.3 1.6z" fill="#222"/><rect x="238.5" y="70.2" width="9.6" height="8.6" rx="1" fill="#dcdcdc" stroke="#666" stroke-width="0.8"/><path d="M246 72L249 75M249 72L246 75" stroke="#2d52d0" stroke-width="0.9"/><path d="M270.5 70.5L279.5 79" stroke="#1f3f9a" stroke-width="1.2"/><circle cx="270.5" cy="70.5" r="1.2" fill="#11aa22"/><circle cx="279.5" cy="79" r="1.2" fill="#11aa22"/><path d="M291.2 70.5Q298 71 300 79" fill="none" stroke="#1f3f9a" stroke-width="1.2"/><circle cx="291.2" cy="70.5" r="1.2" fill="#11aa22"/><circle cx="300" cy="79" r="1.2" fill="#11aa22"/><path d="M310 70.5L312.5 74 317 76 319.5 79.5" fill="none" stroke="#1f3f9a" stroke-width="1"/><circle cx="310" cy="70.5" r="1.1" fill="#11aa22"/><circle cx="312" cy="75" r="0.9" fill="#11aa22"/><circle cx="319.5" cy="79.5" r="1.1" fill="#11aa22"/><circle cx="320.5" cy="75" r="0.9" fill="#11aa22"/><path d="M328.5 70.5V79M336.5 70.5V79" stroke="#11aa22" stroke-width="0.9" stroke-dasharray="1.2 1.2"/><path d="M330.5 72V77.5L333.5 74.7Z" fill="#88aee0"/><path d="M346 73.5H358M349 72L355 78M355 72L349 78" stroke="#3a7ad0" stroke-width="0.8"/><circle cx="346" cy="73.5" r="0.9" fill="#11aa22"/><circle cx="358" cy="73.5" r="0.9" fill="#11aa22"/><circle cx="352" cy="73.5" r="0.9" fill="#11aa22"/><path d="M381 79L386.5 71.5Q391 73 390 78.5" fill="none" stroke="#3a6ad0" stroke-width="0.9"/><circle cx="380.5" cy="70.8" r="0.9" fill="#11bb22"/><circle cx="390.5" cy="70.8" r="0.9" fill="#11bb22"/><circle cx="380.5" cy="79" r="0.9" fill="#11bb22"/><circle cx="390.5" cy="79" r="0.9" fill="#11bb22"/><circle cx="386.5" cy="71.2" r="0.9" fill="#11bb22"/><g transform="translate(3.5,0)"><rect x="396" y="70.8" width="7" height="6" fill="#e8eef8" stroke="#6a8ad0" stroke-width="0.7"/><rect x="399.5" y="73.8" width="5.8" height="5.2" fill="#c8d8f0" stroke="#6a8ad0" stroke-width="0.7"/><circle cx="395.8" cy="70.6" r="0.9" fill="#11bb22"/><circle cx="406" cy="70.6" r="0.9" fill="#11bb22"/><circle cx="395.8" cy="79.3" r="0.9" fill="#11bb22"/><circle cx="406" cy="79.3" r="0.9" fill="#11bb22"/></g><g transform="translate(2.5,0)"><rect x="416" y="71" width="8" height="6" fill="#e8eef8" stroke="#6a8ad0" stroke-width="0.7"/><ellipse cx="421.5" cy="77" rx="3.5" ry="2.3" fill="#c8d8f0"/><circle cx="415.5" cy="70.6" r="0.9" fill="#11bb22"/><circle cx="425.5" cy="70.6" r="0.9" fill="#11bb22"/><circle cx="415.5" cy="79.3" r="0.9" fill="#11bb22"/><circle cx="425.5" cy="79.3" r="0.9" fill="#11bb22"/></g><circle cx="458" cy="73.2" r="2.8" fill="none" stroke="#2040a0" stroke-width="1.2"/><path d="M460 75.2L462.5 78" stroke="#222" stroke-width="1.5"/><g transform="translate(1.5,0)"><path d="M472.5 77.5C471 75 471 73 472.5 72.5L474 74V71L475 70.5 476 71V73.5L477 71.5 478 72V74.5L479 73 480 74C480 77 478.5 79 476 79.5Z" fill="#e8f0ff" stroke="#2545b8" stroke-width="0.8"/></g><g transform="translate(1,0)"><circle cx="495.5" cy="72.3" r="1.8" fill="none" stroke="#2545b8" stroke-width="0.9"/><path d="M494.8 74V75.5H491.5V78.5H499.5V75.5H496.3V74" fill="#cfe0f8" stroke="#2545b8" stroke-width="0.9"/><path d="M491.5 77.5H499.5" stroke="#2545b8" stroke-width="0.9"/></g><path d="M509 79.5L511 77 516.5 71.5 518 73 512.5 78.5Z" fill="#cfe0f8" stroke="#2545b8" stroke-width="0.9"/><path d="M516 70.5L519 73.5" stroke="#2545b8" stroke-width="1.6"/><circle cx="552.1" cy="73.3" r="3.6" fill="#fff" stroke="#2545b8" stroke-width="1.2"/><path d="M550.3 73.3H553.9" stroke="#2545b8" stroke-width="1.1"/><path d="M554.8 76L558.5 79.5" stroke="#222" stroke-width="1.5"/><path d="M565 75H625" stroke="#a9a9a9" stroke-width="2"/><path d="M565 75H576" stroke="#1a7cf5" stroke-width="2"/><circle cx="578.2" cy="75" r="4.2" fill="#fff" stroke="#aaa" stroke-width="0.7"/><circle cx="634.2" cy="73.3" r="3.6" fill="#fff" stroke="#2545b8" stroke-width="1.2"/><path d="M632.4 73.3H636M634.2 71.5V75.1" stroke="#2545b8" stroke-width="1.1"/><path d="M636.9 76L640.6 79.5" stroke="#222" stroke-width="1.5"/><rect x="16" y="85.8" width="3.2" height="2" rx="0.8" fill="#fff" stroke="#1a3aa8" stroke-width="0.7"/><path d="M19.2 86.8H26.5M17.4 87.8V92.6H19M17.4 90.2H19M23 90.2H26.5M23 92.6H26.5" fill="none" stroke="#1a3aa8" stroke-width="0.8"/><rect x="19" y="89.2" width="3" height="2" fill="#fff" stroke="#1a3aa8" stroke-width="0.7"/><rect x="19" y="91.6" width="3" height="2" fill="#fff" stroke="#1a3aa8" stroke-width="0.7"/><rect x="131.5" y="86.5" width="2.2" height="2" fill="#2545b8"/><rect x="131.5" y="89.5" width="2.2" height="2" fill="#2545b8"/><rect x="131.5" y="92.5" width="2.2" height="2" fill="#2545b8"/><rect x="135.5" y="86.5" width="2.2" height="2" fill="#2545b8"/><rect x="135.5" y="89.5" width="2.2" height="2" fill="#2545b8"/><rect x="135.5" y="92.5" width="2.2" height="2" fill="#2545b8"/><circle cx="153.5" cy="89.2" r="2.6" fill="none" stroke="#0d2a8a" stroke-width="1.3"/><path d="M155.5 91.2L158 93.6" stroke="#0d2a8a" stroke-width="1.6"/></svg>
<div style="left:721.6px;top:31.9px;width:12.8px;height:12.8px;border-radius:50%;background:conic-gradient(from 90deg,#ff2020,#ff9000,#ffee00,#60e000,#00d080,#00c8ff,#2060ff,#a030ff,#ff30c0,#ff2020);box-shadow:0 0 0 0.5px rgba(0,0,0,0.15)"></div>
<div style="left:721.6px;top:31.9px;width:12.8px;height:12.8px;border-radius:50%;background:radial-gradient(circle,#fff 0,rgba(255,255,255,0.85) 20%,rgba(255,255,255,0) 65%)"></div>
</body></html>
